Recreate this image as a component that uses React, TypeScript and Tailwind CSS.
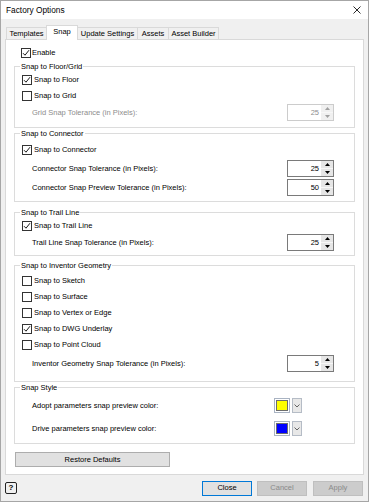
import React from 'react';

const font = { fontFamily: '"Liberation Sans", Arial, sans-serif' };

function Check({ checked }: { checked?: boolean }) {
  return (
    <span className="w-[10px] h-[10px] border border-[#333333] bg-white flex items-center justify-center shrink-0">
      {checked && (
        <svg width="8" height="8" viewBox="0 0 8 8">
          <path d="M1 4.2 L3 6.2 L7 1.2" fill="none" stroke="#1a1a1a" strokeWidth="1" />
        </svg>
      )}
    </span>
  );
}

function CheckRow({ label, checked }: { label: string; checked?: boolean }) {
  return (
    <div className="h-[16px] flex items-center gap-[2px] pl-[7px]">
      <Check checked={checked} />
      <span>{label}</span>
    </div>
  );
}

function Spinner({ value, disabled }: { value: string; disabled?: boolean }) {
  return (
    <div
      className={`w-[47px] h-[17px] flex border ${
        disabled ? 'border-[#cccccc] text-[#8d8d8d]' : 'border-[#7a7a7a] text-black'
      }`}
    >
      <div className="flex-1 bg-white flex items-center justify-end pr-[2px]">{value}</div>
      <div className={`w-[12px] flex flex-col ${disabled ? 'bg-[#f0f0f0]' : 'bg-[#e6e6e6]'}`}>
        <div className="flex-1 flex items-center justify-center border-b border-[#f7f7f7]">
          <svg width="5" height="3" viewBox="0 0 5 3">
            <path d="M0 3 L2.5 0 L5 3 Z" fill={disabled ? '#a0a0a0' : '#000'} />
          </svg>
        </div>
        <div className="flex-1 flex items-center justify-center">
          <svg width="5" height="3" viewBox="0 0 5 3">
            <path d="M0 0 L2.5 3 L5 0 Z" fill={disabled ? '#a0a0a0' : '#000'} />
          </svg>
        </div>
      </div>
    </div>
  );
}

function SpinRow({ label, value, disabled }: { label: string; value: string; disabled?: boolean }) {
  return (
    <div className={`h-[17px] flex items-center pl-[17px] pr-[20px] ${disabled ? 'text-[#8d8d8d]' : ''}`}>
      <span className="flex-1">{label}</span>
      <Spinner value={value} disabled={disabled} />
    </div>
  );
}

function ColorRow({ label, color }: { label: string; color: string }) {
  return (
    <div className="h-[15px] flex items-center pl-[17px] pr-[52px]">
      <span className="flex-1">{label}</span>
      <div className="flex h-[15px] gap-[2px]">
        <div className="w-[16px] h-[15px] border border-[#a9b3c2] bg-white p-[1px]">
          <div className="w-full h-full border border-[#6d6d6d]" style={{ backgroundColor: color }} />
        </div>
        <div className="w-[10px] h-[15px] border border-[#b5bcc6] bg-[#e8e8e8] flex items-center justify-center">
          <svg width="6" height="4" viewBox="0 0 6 4">
            <path d="M0.5 0.5 L3 3 L5.5 0.5" fill="none" stroke="#555" strokeWidth="0.9" />
          </svg>
        </div>
      </div>
    </div>
  );
}

function Group({ title, className, children }: { title: string; className?: string; children: React.ReactNode }) {
  return (
    <fieldset className={`mx-[8px] border border-[#dcdcdc] ${className ?? ''}`}>
      <legend className="ml-[5px] px-[1px] leading-[11px]">{title}</legend>
      {children}
    </fieldset>
  );
}

const tabs = [
  { name: 'Templates', w: 'w-[41px]' },
  { name: 'Snap', w: 'w-[32px]', active: true },
  { name: 'Update Settings', w: 'w-[61px]' },
  { name: 'Assets', w: 'w-[32px]' },
  { name: 'Asset Builder', w: 'w-[51px]' },
];

export default function App() {
  return (
    <div
      className="w-[369px] h-[502px] bg-[#f0f0f0] border border-[#a6a6a6] flex flex-col text-[7.5px] text-black overflow-hidden"
      style={font}
    >
      <div className="h-[18px] bg-white flex items-center pl-[5px] pr-[7px] shrink-0">
        <span className="flex-1 text-[8.3px]">Factory Options</span>
        <svg width="8" height="8" viewBox="0 0 8 8">
          <path d="M0.5 0.5 L7.5 7.5 M7.5 0.5 L0.5 7.5" stroke="#111" strokeWidth="0.9" />
        </svg>
      </div>

      <div className="mt-[6px] ml-[5px] h-[15px] -mb-px flex items-end relative z-10 shrink-0">
        {tabs.map((t) =>
          t.active ? (
            <div
              key={t.name}
              className={`${t.w} h-[15px] -ml-px bg-white border border-b-0 border-[#d9d9d9] flex items-center justify-center pb-[2px]`}
            >
              {t.name}
            </div>
          ) : (
            <div
              key={t.name}
              className={`${t.w} h-[12px] mb-px -ml-px first:ml-0 bg-[#f0f0f0] border border-b-0 border-[#d9d9d9] flex items-center justify-center`}
            >
              {t.name}
            </div>
          )
        )}
      </div>

      <div className="mx-[4px] h-[436px] bg-white border border-[#d9d9d9] flex flex-col pt-[7px] shrink-0">
        <div className="h-[12px] flex items-center gap-[1px] ml-[15px]">
          <Check checked />
          <span>Enable</span>
        </div>

        <Group title="Snap to Floor/Grid" className="mt-[2px] pb-[6px]">
          <CheckRow label="Snap to Floor" checked />
          <CheckRow label="Snap to Grid" />
          <SpinRow label="Grid Snap Tolerance (in Pixels):" value="25" disabled />
        </Group>

        <Group title="Snap to Connector" className="pt-[3px] pb-[5px]">
          <CheckRow label="Snap to Connector" checked />
          <div className="mt-[2px]">
            <SpinRow label="Connector Snap Tolerance (in Pixels):" value="25" />
          </div>
          <div className="mt-[2px]">
            <SpinRow label="Connector Snap Preview Tolerance (in Pixels):" value="50" />
          </div>
        </Group>

        <Group title="Snap to Trail Line" className="mt-[5px] pb-[4px]">
          <CheckRow label="Snap to Trail Line" checked />
          <SpinRow label="Trail Line Snap Tolerance (in Pixels):" value="25" />
        </Group>

        <Group title="Snap to Inventor Geometry" className="mt-[4px] pt-[2px] pb-[9px]">
          <CheckRow label="Snap to Sketch" />
          <CheckRow label="Snap to Surface" />
          <CheckRow label="Snap to Vertex or Edge" />
          <CheckRow label="Snap to DWG Underlay" checked />
          <CheckRow label="Snap to Point Cloud" />
          <div className="mt-[2px]">
            <SpinRow label="Inventor Geometry Snap Tolerance (in Pixels):" value="5" />
          </div>
        </Group>

        <Group title="Snap Style" className="pb-[7px]">
          <div className="mt-[5px]">
            <ColorRow label="Adopt parameters snap preview color:" color="#ffff00" />
          </div>
          <div className="mt-[8px]">
            <ColorRow label="Drive parameters snap preview color:" color="#0000ff" />
          </div>
        </Group>

        <button className="mt-[8px] ml-[9px] w-[155px] h-[15px] bg-[#e1e1e1] border border-[#adadad] flex items-center justify-center">
          Restore Defaults
        </button>
      </div>

      <div className="flex-1 flex items-center pl-[4px] pr-[5px]">
        <div className="w-[12px] h-[12px] border border-[#222] rounded-[2px] flex items-center justify-center font-bold text-[8px] leading-none">
          ?
        </div>
        <div className="flex-1" />
        <button className="w-[50px] h-[15px] bg-[#e1e1e1] border border-[#0078d7] flex items-center justify-center">
          Close
        </button>
        <button className="ml-[5px] w-[50px] h-[15px] bg-[#cccccc] border border-[#bfbfbf] text-[#8a8a8a] flex items-center justify-center">
          Cancel
        </button>
        <button className="ml-[6px] w-[50px] h-[15px] bg-[#cccccc] border border-[#bfbfbf] text-[#8a8a8a] flex items-center justify-center">
          Apply
        </button>
      </div>
    </div>
  );
}
